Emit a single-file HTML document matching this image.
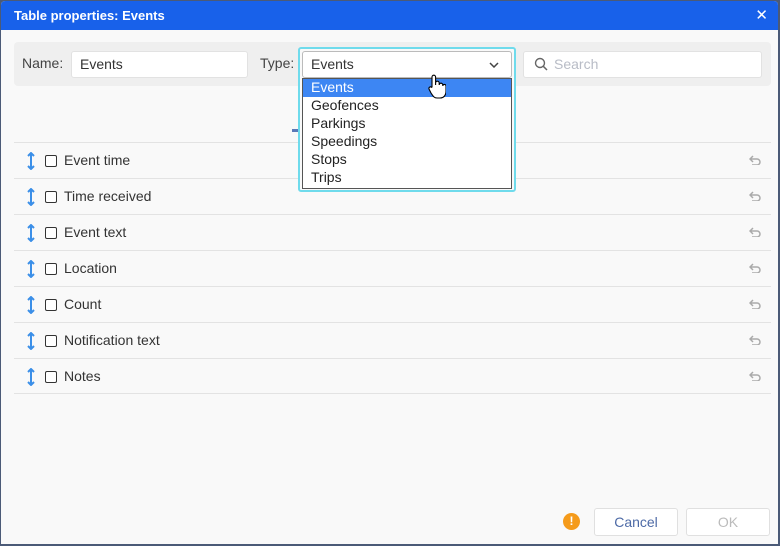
<!DOCTYPE html>
<html><head><style>
*{box-sizing:border-box;margin:0;padding:0}
body{width:780px;height:546px;background:#4b5a77;font-family:"Liberation Sans",sans-serif;position:relative;overflow:hidden}
.win{position:absolute;left:1px;top:1px;width:777px;height:543px;background:#f9f9f9;border-radius:4px 4px 0 0;overflow:hidden}
.hdr{height:29px;background:#1861ea;color:#fff;font-size:13px;font-weight:bold;padding:7px 0 0 13px}
.x{position:absolute;right:10px;top:5px;color:#fff;font-size:15px}
.tb{position:absolute;left:13px;top:41px;width:757px;height:44px;background:#efefef;border-radius:4px}
.lbl{position:absolute;font-size:14px;color:#444;top:13px}
.inp{position:absolute;top:9px;height:27px;background:#fff;border:1px solid #e2e2e2;border-radius:3px;font-size:14px;color:#333;padding:4px 8px}
.row{position:absolute;left:13px;width:757px;height:36px;border-top:1px solid #e3e3e3;font-size:14px;color:#333}
.row .t{position:absolute;left:50px;top:9px}
.cb{position:absolute;left:31px;top:12px;width:12px;height:12px;border:1px solid #333;border-radius:2px;background:#fff}
.ar{position:absolute;left:12px;top:9px}
.un{position:absolute;right:10px;top:12px}
.dd{position:absolute;left:297px;top:46px;width:218px;height:145px;border:2px solid #6fdbec;border-radius:3px;background:#f9f9f9}
.sel{position:absolute;left:2px;top:2px;width:210px;height:27px;border:1px solid #bbb;border-radius:3px;background:#fff;font-size:14px;color:#333;padding:4px 8px}
.list{position:absolute;left:2px;top:29px;width:210px;height:111px;border:1px solid #555;background:#fff}
.list div{height:18px;font-size:14px;color:#222;padding:0 0 0 8px}
.btn{position:absolute;top:507px;height:28px;border:1px solid #e0e0e0;border-radius:3px;background:#fff;font-size:14px;text-align:center;padding-top:5px}
</style></head><body>
<div class="win">
<div class="hdr">Table properties: Events</div>
<div class="x">✕</div>
<div class="tb">
<div class="lbl" style="left:8px">Name:</div>
<div class="inp" style="left:57px;width:177px">Events</div>
<div class="lbl" style="left:246px">Type:</div>
<div class="inp" style="left:509px;width:239px;color:#b8bcc6;padding-left:30px">Search</div>
<svg style="position:absolute;left:520px;top:15px" width="14" height="14"><circle cx="6" cy="6" r="4.5" fill="none" stroke="#666" stroke-width="1.4"/><path d="M9.3 9.3L13 13" stroke="#666" stroke-width="1.5"/></svg>
</div>
<div style="position:absolute;left:291px;top:128px;width:8px;height:3px;background:#5b79b8"></div>
<div class="row" style="top:141px"><svg class="ar" width="10" height="18"><path d="M5 1v16M2 4l3-3 3 3M2 14l3 3 3-3" fill="none" stroke="#3b8fe8" stroke-width="2"/></svg><div class="cb"></div><div class="t">Event time</div><svg class="un" width="12" height="10"><path d="M4 1L1 4l3 3M1 4h7a3 3 0 010 6H3" fill="none" stroke="#aaa" stroke-width="1.5"/></svg></div>
<div class="row" style="top:177px"><svg class="ar" width="10" height="18"><path d="M5 1v16M2 4l3-3 3 3M2 14l3 3 3-3" fill="none" stroke="#3b8fe8" stroke-width="2"/></svg><div class="cb"></div><div class="t">Time received</div><svg class="un" width="12" height="10"><path d="M4 1L1 4l3 3M1 4h7a3 3 0 010 6H3" fill="none" stroke="#aaa" stroke-width="1.5"/></svg></div>
<div class="row" style="top:213px"><svg class="ar" width="10" height="18"><path d="M5 1v16M2 4l3-3 3 3M2 14l3 3 3-3" fill="none" stroke="#3b8fe8" stroke-width="2"/></svg><div class="cb"></div><div class="t">Event text</div><svg class="un" width="12" height="10"><path d="M4 1L1 4l3 3M1 4h7a3 3 0 010 6H3" fill="none" stroke="#aaa" stroke-width="1.5"/></svg></div>
<div class="row" style="top:249px"><svg class="ar" width="10" height="18"><path d="M5 1v16M2 4l3-3 3 3M2 14l3 3 3-3" fill="none" stroke="#3b8fe8" stroke-width="2"/></svg><div class="cb"></div><div class="t">Location</div><svg class="un" width="12" height="10"><path d="M4 1L1 4l3 3M1 4h7a3 3 0 010 6H3" fill="none" stroke="#aaa" stroke-width="1.5"/></svg></div>
<div class="row" style="top:285px"><svg class="ar" width="10" height="18"><path d="M5 1v16M2 4l3-3 3 3M2 14l3 3 3-3" fill="none" stroke="#3b8fe8" stroke-width="2"/></svg><div class="cb"></div><div class="t">Count</div><svg class="un" width="12" height="10"><path d="M4 1L1 4l3 3M1 4h7a3 3 0 010 6H3" fill="none" stroke="#aaa" stroke-width="1.5"/></svg></div>
<div class="row" style="top:321px"><svg class="ar" width="10" height="18"><path d="M5 1v16M2 4l3-3 3 3M2 14l3 3 3-3" fill="none" stroke="#3b8fe8" stroke-width="2"/></svg><div class="cb"></div><div class="t">Notification text</div><svg class="un" width="12" height="10"><path d="M4 1L1 4l3 3M1 4h7a3 3 0 010 6H3" fill="none" stroke="#aaa" stroke-width="1.5"/></svg></div>
<div class="row" style="top:357px;border-bottom:1px solid #e3e3e3"><svg class="ar" width="10" height="18"><path d="M5 1v16M2 4l3-3 3 3M2 14l3 3 3-3" fill="none" stroke="#3b8fe8" stroke-width="2"/></svg><div class="cb"></div><div class="t">Notes</div><svg class="un" width="12" height="10"><path d="M4 1L1 4l3 3M1 4h7a3 3 0 010 6H3" fill="none" stroke="#aaa" stroke-width="1.5"/></svg></div>
<div class="dd">
<div class="sel">Events<svg style="position:absolute;right:12px;top:10px" width="10" height="6"><path d="M1 1l4 4 4-4" fill="none" stroke="#444" stroke-width="1.5"/></svg></div>
<div class="list"><div style="background:#3d86f3;color:#fff">Events</div><div>Geofences</div><div>Parkings</div><div>Speedings</div><div>Stops</div><div>Trips</div></div>
</div>
<svg style="position:absolute;left:425px;top:73px" width="20" height="26"><path d="M6 13V3a1.8 1.8 0 013.6 0v8V9a1.8 1.8 0 013.6 0v2a1.8 1.8 0 013.6 0v1a1.6 1.6 0 013.2 0v5c0 4-2 7-6 7h-3c-3 0-4-2-6-5l-2-4a1.6 1.6 0 012.6-1.7z" fill="#fff" stroke="#000" stroke-width="1.1"/></svg>
<div style="position:absolute;left:562px;top:512px;width:17px;height:17px;border-radius:50%;background:#f59b1b;color:#fff;font-size:12px;font-weight:bold;text-align:center;line-height:17px">!</div>
<div class="btn" style="left:593px;width:84px;color:#4d6aa6">Cancel</div>
<div class="btn" style="left:685px;width:84px;color:#bbb">OK</div>
</div>
</body></html>
